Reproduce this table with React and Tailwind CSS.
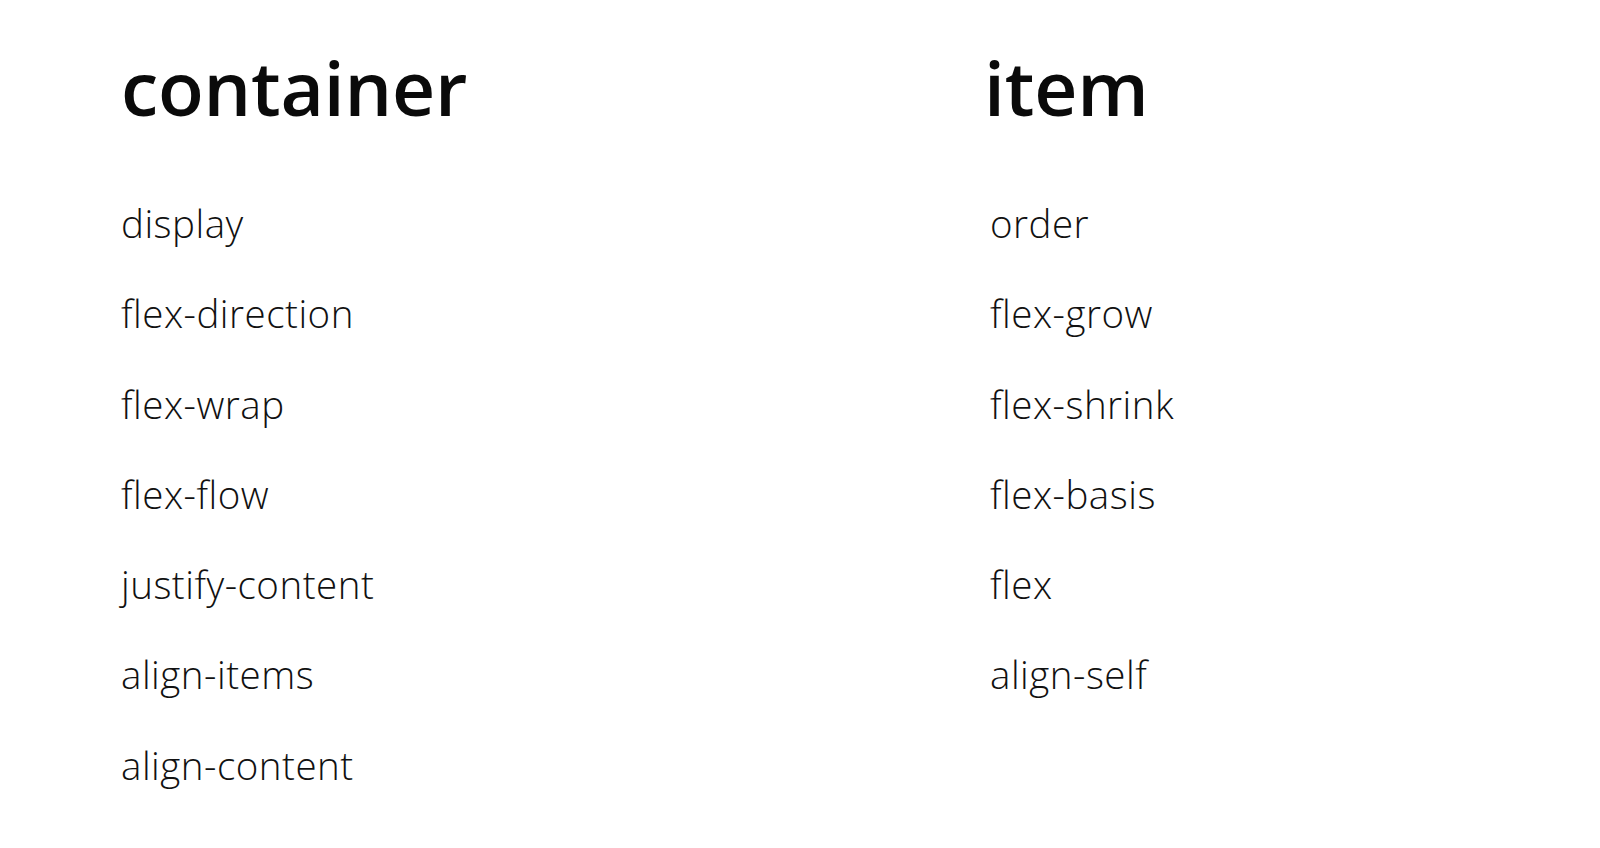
const container = [
  'display',
  'flex-direction',
  'flex-wrap',
  'flex-flow',
  'justify-content',
  'align-items',
  'align-content',
]

const item = ['order', 'flex-grow', 'flex-shrink', 'flex-basis', 'flex', 'align-self']

function Column({ title, props, className, titleClass = '' }) {
  return (
    <div className={className}>
      <h1 className={`text-[75px] font-semibold leading-none tracking-[-0.2px] text-[#0a0a0a] ${titleClass}`}>{title}</h1>
      <ul className="mt-[79px] flex flex-col gap-[52.3px]">
        {props.map((p) => (
          <li key={p} className="text-[38.5px] font-light leading-[38px] tracking-[0.5px] text-[#111]">
            {p}
          </li>
        ))}
      </ul>
    </div>
  )
}

export default function App() {
  return (
    <div
      className="min-h-[848px] w-[1600px] bg-white pl-[121px] pt-[50px]"
      style={{ fontFamily: '"Open Sans", "Noto Sans", sans-serif' }}
    >
      <div className="flex">
        <Column title="container" props={container} className="w-[869px]" />
        <Column title="item" props={item} titleClass="-ml-[6px]" />
      </div>
    </div>
  )
}
